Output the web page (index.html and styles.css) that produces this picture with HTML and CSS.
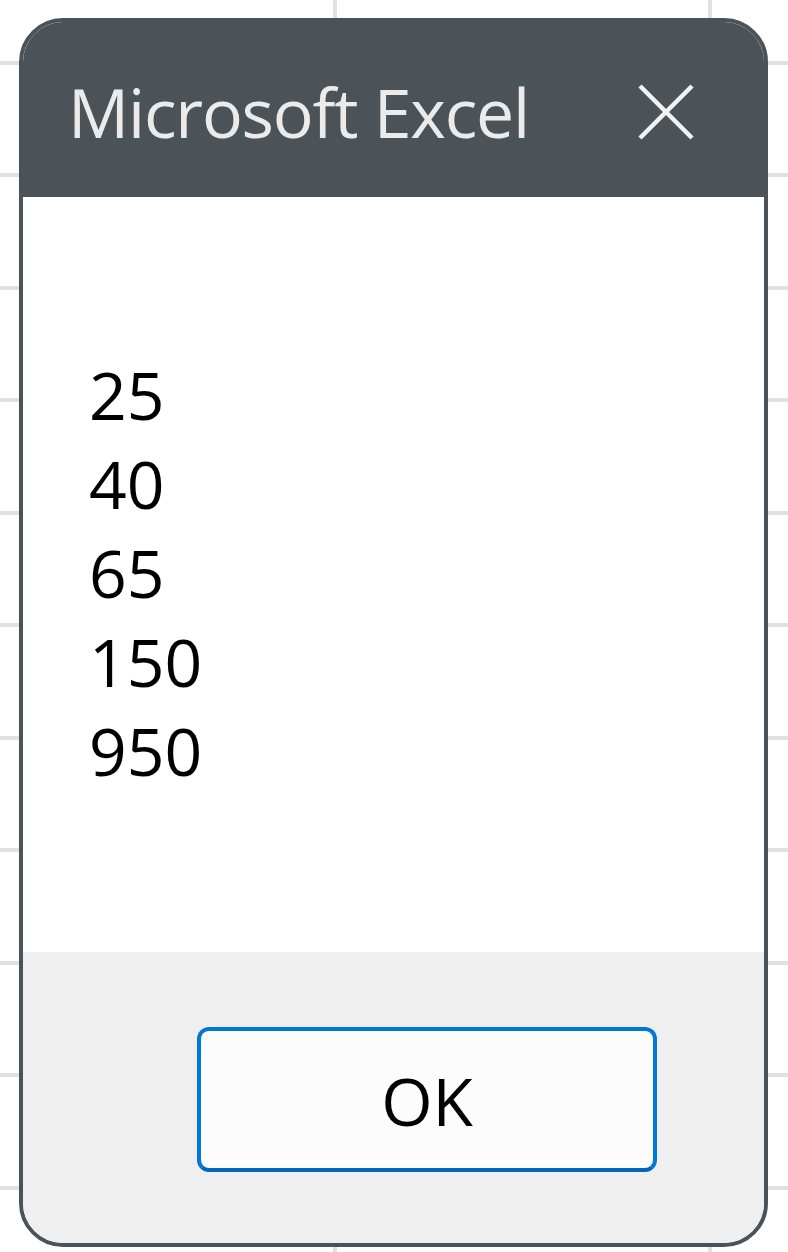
FILE: index.html
```html
<!DOCTYPE html>
<html lang="en">
<head>
    <meta charset="UTF-8">
    <meta name="viewport" content="width=device-width, initial-scale=1.0">
    <title>Microsoft Excel</title>
    <link rel="stylesheet" href="styles.css">
</head>
<body>
    <div class="dialog">
        <div class="titlebar">
            <span class="title">Microsoft Excel</span>
            <svg class="close" width="56" height="56" viewBox="0 0 56 56">
                <path d="M2 2 L54 54 M54 2 L2 54" stroke="#f2f2f2" stroke-width="4.5" fill="none"/>
            </svg>
        </div>
        <div class="message">
            <div>25</div>
            <div>40</div>
            <div>65</div>
            <div>150</div>
            <div>950</div>
        </div>
        <div class="footer">
            <button class="ok">OK</button>
        </div>
    </div>
</body>
</html>
```

FILE: styles.css
```css
html, body {
    margin: 0;
    height: 1252px;
}
body {
    font-family: "Open Sans", "Noto Sans", sans-serif;
    padding: 18px 20px 0 19px;
    box-sizing: border-box;
    background-color: #ffffff;
    /* spreadsheet gridlines behind the dialog */
    background-image:
        repeating-linear-gradient(to bottom, transparent 0, transparent 61px, #e1e1e1 61px, #e1e1e1 65px, transparent 65px, transparent 112.5px),
        linear-gradient(to right, transparent 333px, #e1e1e1 333px, #e1e1e1 337px, transparent 337px, transparent 708px, #e1e1e1 708px, #e1e1e1 712px, transparent 712px);
}
.dialog {
    display: flex;
    flex-direction: column;
    height: 1229px;
    border: 4px solid #4b5359;
    border-radius: 44px;
    overflow: hidden;
    box-sizing: border-box;
    background: #ffffff;
}
.titlebar {
    display: flex;
    align-items: center;
    justify-content: space-between;
    height: 175px;
    padding: 0 70px 0 45px;
    background: #4b5359;
    flex-shrink: 0;
}
.title {
    color: #ebebeb;
    font-size: 68px;
    letter-spacing: -1.2px;
    margin-top: 4px;
}
.close {
    margin-top: 4px;
}
.message {
    flex: 1;
    padding: 153px 0 0 66px;
    font-size: 66px;
    line-height: 89px;
    color: #000000;
}
.footer {
    height: 291px;
    background: #efefef;
    padding: 75px 0 0 174px;
    box-sizing: border-box;
    flex-shrink: 0;
}
.ok {
    display: block;
    width: 460px;
    height: 145px;
    border: 4px solid #0078d4;
    border-bottom-color: #0067c0;
    border-radius: 12px;
    background: #fcfcfc;
    font-family: "Open Sans", "Noto Sans", sans-serif;
    font-size: 66px;
    color: #000000;
    padding: 0;
}
```
